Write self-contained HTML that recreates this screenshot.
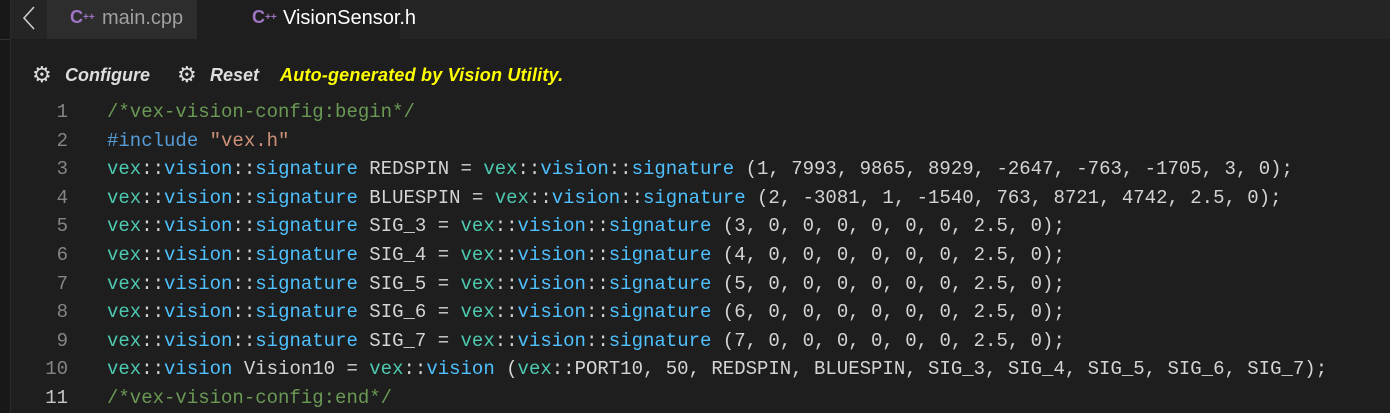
<!DOCTYPE html>
<html><head><style>
body{margin:0;width:1390px;height:413px;background:#1e1e1e;overflow:hidden;position:relative;font-family:"Liberation Sans",sans-serif}
.strip{position:absolute;left:0;top:0;width:10px;height:413px;background:#181818;border-right:1px solid #2b2b2b}
.strip:after{content:"";position:absolute;left:0;top:39px;width:10px;height:1px;background:#333}
.tabs{position:absolute;left:11px;top:0;right:0;height:39px;background:#252526}
.tab{position:absolute;top:0;height:39px;font-size:20px;line-height:37px}
.t1{left:36px;width:150px;background:#2d2d2d;color:#a0a0a0}
.t2{left:186px;width:203px;background:#1e1e1e;color:#fff}
.ic{position:absolute;top:6px;line-height:22px;font-weight:bold;color:#a074c4;font-size:18px}
.ic small{font-size:10px;vertical-align:3px}
.back{position:absolute;left:10px;top:5px}
.tb{position:absolute;top:64px;line-height:22px;font-style:italic;font-weight:bold;font-size:18px;color:#ddd}
.g{position:absolute;top:64px;font-size:22px;line-height:22px;color:#ddd}
.code{position:absolute;left:0;top:98px;font-family:"Liberation Mono",monospace;font-size:19px;line-height:28.6px;white-space:pre;color:#d4d4d4}
.ln{display:inline-block;width:68px;text-align:right;color:#858585;margin-right:39px}
.c{color:#6a9955}.k{color:#569cd6}.s{color:#ce9178}.t{color:#4ec9b0}.v{color:#4fc1ff}
</style></head><body>
<div class="strip"></div>
<div class="tabs">
<svg class="back" width="16" height="26" viewBox="0 0 16 26"><path d="M13 2 L3 13 L13 24" stroke="#ccc" stroke-width="1.6" fill="none"/></svg>
<div class="tab t1"><span class="ic" style="left:23px">C<small>++</small></span><span style="position:absolute;left:55px">main.cpp</span></div>
<div class="tab t2"><span class="ic" style="left:55px">C<small>++</small></span><span style="position:absolute;left:86px">VisionSensor.h</span></div>
</div>
<div class="g" style="left:32px">⚙</div><div class="tb" style="left:65px">Configure</div>
<div class="g" style="left:177px">⚙</div><div class="tb" style="left:210px">Reset</div>
<div class="tb" style="left:280px;color:#ffff00;letter-spacing:0.2px">Auto-generated by Vision Utility.</div>
<div class="code"><span class="ln">1</span><span class="c">/*vex-vision-config:begin*/</span>
<span class="ln">2</span><span class="k">#include</span> <span class="s">"vex.h"</span>
<span class="ln">3</span><span class="t">vex</span>::<span class="v">vision</span>::<span class="v">signature</span> REDSPIN = <span class="t">vex</span>::<span class="v">vision</span>::<span class="v">signature</span> (1, 7993, 9865, 8929, -2647, -763, -1705, 3, 0);
<span class="ln">4</span><span class="t">vex</span>::<span class="v">vision</span>::<span class="v">signature</span> BLUESPIN = <span class="t">vex</span>::<span class="v">vision</span>::<span class="v">signature</span> (2, -3081, 1, -1540, 763, 8721, 4742, 2.5, 0);
<span class="ln">5</span><span class="t">vex</span>::<span class="v">vision</span>::<span class="v">signature</span> SIG_3 = <span class="t">vex</span>::<span class="v">vision</span>::<span class="v">signature</span> (3, 0, 0, 0, 0, 0, 0, 2.5, 0);
<span class="ln">6</span><span class="t">vex</span>::<span class="v">vision</span>::<span class="v">signature</span> SIG_4 = <span class="t">vex</span>::<span class="v">vision</span>::<span class="v">signature</span> (4, 0, 0, 0, 0, 0, 0, 2.5, 0);
<span class="ln">7</span><span class="t">vex</span>::<span class="v">vision</span>::<span class="v">signature</span> SIG_5 = <span class="t">vex</span>::<span class="v">vision</span>::<span class="v">signature</span> (5, 0, 0, 0, 0, 0, 0, 2.5, 0);
<span class="ln">8</span><span class="t">vex</span>::<span class="v">vision</span>::<span class="v">signature</span> SIG_6 = <span class="t">vex</span>::<span class="v">vision</span>::<span class="v">signature</span> (6, 0, 0, 0, 0, 0, 0, 2.5, 0);
<span class="ln">9</span><span class="t">vex</span>::<span class="v">vision</span>::<span class="v">signature</span> SIG_7 = <span class="t">vex</span>::<span class="v">vision</span>::<span class="v">signature</span> (7, 0, 0, 0, 0, 0, 0, 2.5, 0);
<span class="ln">10</span><span class="t">vex</span>::<span class="v">vision</span> Vision10 = <span class="t">vex</span>::<span class="v">vision</span> (<span class="t">vex</span>::PORT10, 50, REDSPIN, BLUESPIN, SIG_3, SIG_4, SIG_5, SIG_6, SIG_7);
<span class="ln" style="color:#c6c6c6">11</span><span class="c">/*vex-vision-config:end*/</span></div>
</body></html>
